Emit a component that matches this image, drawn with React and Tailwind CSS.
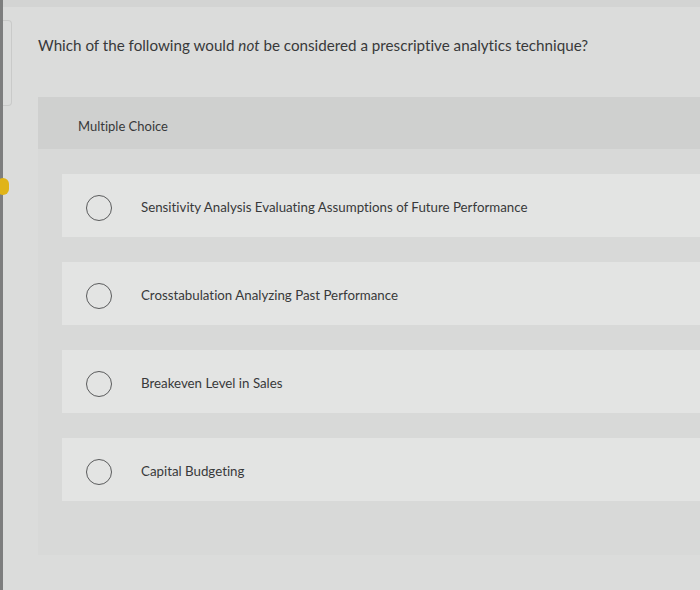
const OPTIONS = [
  "Sensitivity Analysis Evaluating Assumptions of Future Performance",
  "Crosstabulation Analyzing Past Performance",
  "Breakeven Level in Sales",
  "Capital Budgeting",
];

function Option({ label }) {
  return (
    <div className="flex items-center h-[63px] bg-[#e3e4e3] pl-[24px] pt-[4px]">
      <span className="w-[26px] h-[26px] rounded-full border-[1.5px] border-[#5a5b5c] shrink-0" />
      <span className="ml-[29px] text-[13.3px] text-[#38393a]">{label}</span>
    </div>
  );
}

export default function App() {
  return (
    <div
      className="w-[700px] h-[590px] overflow-hidden bg-[#dbdcdb] flex [font-variant-ligatures:none]"
      style={{ fontFamily: "Lato, 'Open Sans', sans-serif" }}
    >
      {/* left edge of the screen */}
      <div className="w-[3px] bg-[#7d7e7e] shrink-0" />
      <div className="relative flex-1 flex flex-col">
        <div className="absolute left-0 top-[20px] w-[9px] h-[86px] border border-l-0 border-[#c9cac9] rounded-r-sm" />
        <div className="absolute -left-[6px] top-[178px] w-[12px] h-[17px] rounded-full bg-[#e0b418]" />
        <div className="h-[7px] bg-[#d3d4d3]" />
        <h1 className="ml-[35px] mt-[27px] text-[15.2px] leading-[22px] text-[#38393a]">
          Which of the following would <em>not</em> be considered a prescriptive analytics technique?
        </h1>
        <section className="ml-[35px] mt-[41px] bg-[#d8d9d8] h-[458px]">
          <div className="h-[52px] bg-[#cfd0cf] flex items-center pl-[40px] pt-[7px] text-[13px] text-[#38393a]">
            Multiple Choice
          </div>
          <div className="ml-[24px] mt-[25px] flex flex-col gap-[25px]">
            {OPTIONS.map((o) => (
              <Option key={o} label={o} />
            ))}
          </div>
        </section>
      </div>
    </div>
  );
}
